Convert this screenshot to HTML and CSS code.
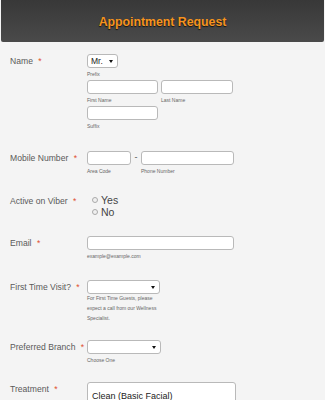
FILE: index.html
```html
<!DOCTYPE html>
<html>
<head>
<meta charset="utf-8">
<link rel="stylesheet" href="styles.css">
</head>
<body>
<div class="header"><h1>Appointment Request</h1></div>
<form class="form">
  <div class="row row-name">
    <div class="label">Name <span class="req">*</span></div>
    <div class="fields">
      <div class="field">
        <div class="select sel-prefix"><span>Mr.</span><i class="arrow"></i></div>
        <div class="cap">Prefix</div>
      </div>
      <div class="pair">
        <div class="field"><div class="input w71"></div><div class="cap">First Name</div></div>
        <div class="field"><div class="input w72"></div><div class="cap">Last Name</div></div>
      </div>
      <div class="field"><div class="input w71"></div><div class="cap">Suffix</div></div>
    </div>
  </div>

  <div class="row row-mobile">
    <div class="label">Mobile Number <span class="req">*</span></div>
    <div class="fields">
      <div class="pair tight">
        <div class="field"><div class="input w44"></div><div class="cap">Area Code</div></div>
        <div class="dash">-</div>
        <div class="field"><div class="input w93"></div><div class="cap">Phone Number</div></div>
      </div>
    </div>
  </div>

  <div class="row row-viber">
    <div class="label">Active on Viber <span class="req">*</span></div>
    <div class="fields radios">
      <div class="radio"><i class="dot"></i><span>Yes</span></div>
      <div class="radio"><i class="dot"></i><span>No</span></div>
    </div>
  </div>

  <div class="row row-email">
    <div class="label">Email <span class="req">*</span></div>
    <div class="fields">
      <div class="field"><div class="input w147"></div><div class="cap">example@example.com</div></div>
    </div>
  </div>

  <div class="row row-visit">
    <div class="label">First Time Visit? <span class="req">*</span></div>
    <div class="fields">
      <div class="field">
        <div class="select s73"><span></span><i class="arrow"></i></div>
        <div class="cap note">For First Time Guests, please expect a call from our Wellness Specialist.</div>
      </div>
    </div>
  </div>

  <div class="row row-branch">
    <div class="label">Preferred Branch <span class="req">*</span></div>
    <div class="fields">
      <div class="field">
        <div class="select s74"><span></span><i class="arrow"></i></div>
        <div class="cap">Choose One</div>
      </div>
    </div>
  </div>

  <div class="row row-treat">
    <div class="label">Treatment <span class="req">*</span></div>
    <div class="fields">
      <div class="listbox"><div class="opt">Clean (Basic Facial)</div></div>
    </div>
  </div>
</form>
</body>
</html>
```
FILE: styles.css
```css
html, body {
  margin: 0;
  padding: 0;
  height: 100%;
  overflow: hidden;
}
body {
  background: #f4f4f4;
  font-family: "Liberation Sans", Arial, sans-serif;
  color: #555;
}
.header {
  margin: 0 1px;
  height: 42px;
  background: linear-gradient(#383838, #4a4a4a);
  border-radius: 0 0 2px 2px;
  display: flex;
  align-items: center;
  justify-content: center;
}
.header h1 {
  margin: 0;
  padding-top: 1px;
  font-size: 12.3px;
  font-weight: bold;
  color: #f7941d;
  text-shadow: 0 1px 1px #111;
}
.form {
  display: flex;
  flex-direction: column;
}
.row {
  display: flex;
  padding-left: 10px;
}
.label {
  width: 77px;
  flex: none;
  font-size: 8.6px;
  line-height: 14px;
  color: #5a5a5a;
  white-space: nowrap;
}
.req {
  color: #e0502e;
  margin-left: 3px;
}
.fields {
  display: flex;
  flex-direction: column;
}
.field {
  display: flex;
  flex-direction: column;
}
.pair {
  display: flex;
  gap: 3px;
}
.pair.tight {
  gap: 0;
}
.input, .select {
  height: 12px;
  border: 1px solid #b9b9b9;
  border-radius: 3px;
  background: #fff;
  box-sizing: content-box;
}
.w44 { width: 42px; }
.w71 { width: 69px; }
.w72 { width: 70px; }
.w93 { width: 91px; }
.w147 { width: 145px; }
.select {
  display: flex;
  align-items: center;
  justify-content: space-between;
  padding: 0 4px 0 3px;
}
.select span {
  font-size: 8.5px;
  color: #222;
}
.sel-prefix { width: 22px; }
.s73 { width: 64px; }
.s74 { width: 65px; }
.arrow {
  width: 0;
  height: 0;
  border-left: 2px solid transparent;
  border-right: 2px solid transparent;
  border-top: 3px solid #111;
}
.cap {
  font-size: 5px;
  color: #666;
  line-height: 6px;
  margin-top: 3px;
  margin-bottom: 3px;
}
.note {
  width: 74px;
  line-height: 10px;
  margin-top: -1px;
}
.dash {
  width: 10px;
  text-align: center;
  font-size: 9px;
  color: #555;
  line-height: 12px;
}
.row-name { margin-top: 12px; }
.row-mobile { margin-top: 19px; }
.row-viber { margin-top: 17px; }
.row-email { margin-top: 18px; }
.row-visit { margin-top: 18px; }
.row-branch { margin-top: 14px; }
.row-treat { margin-top: 16px; }
.radios {
  padding-left: 5px;
}
.radio {
  display: flex;
  align-items: center;
  height: 12px;
}
.radio span {
  font-size: 10.5px;
  color: #444;
  margin-left: 3px;
}
.dot {
  width: 4px;
  height: 4px;
  border: 1px solid #aaa;
  border-radius: 50%;
  background: #f0f0f0;
}
.listbox {
  width: 147px;
  height: 40px;
  border: 1px solid #b9b9b9;
  border-radius: 3px;
  background: #fff;
}
.opt {
  font-size: 9px;
  color: #222;
  padding: 8px 4px 0;
}
```
